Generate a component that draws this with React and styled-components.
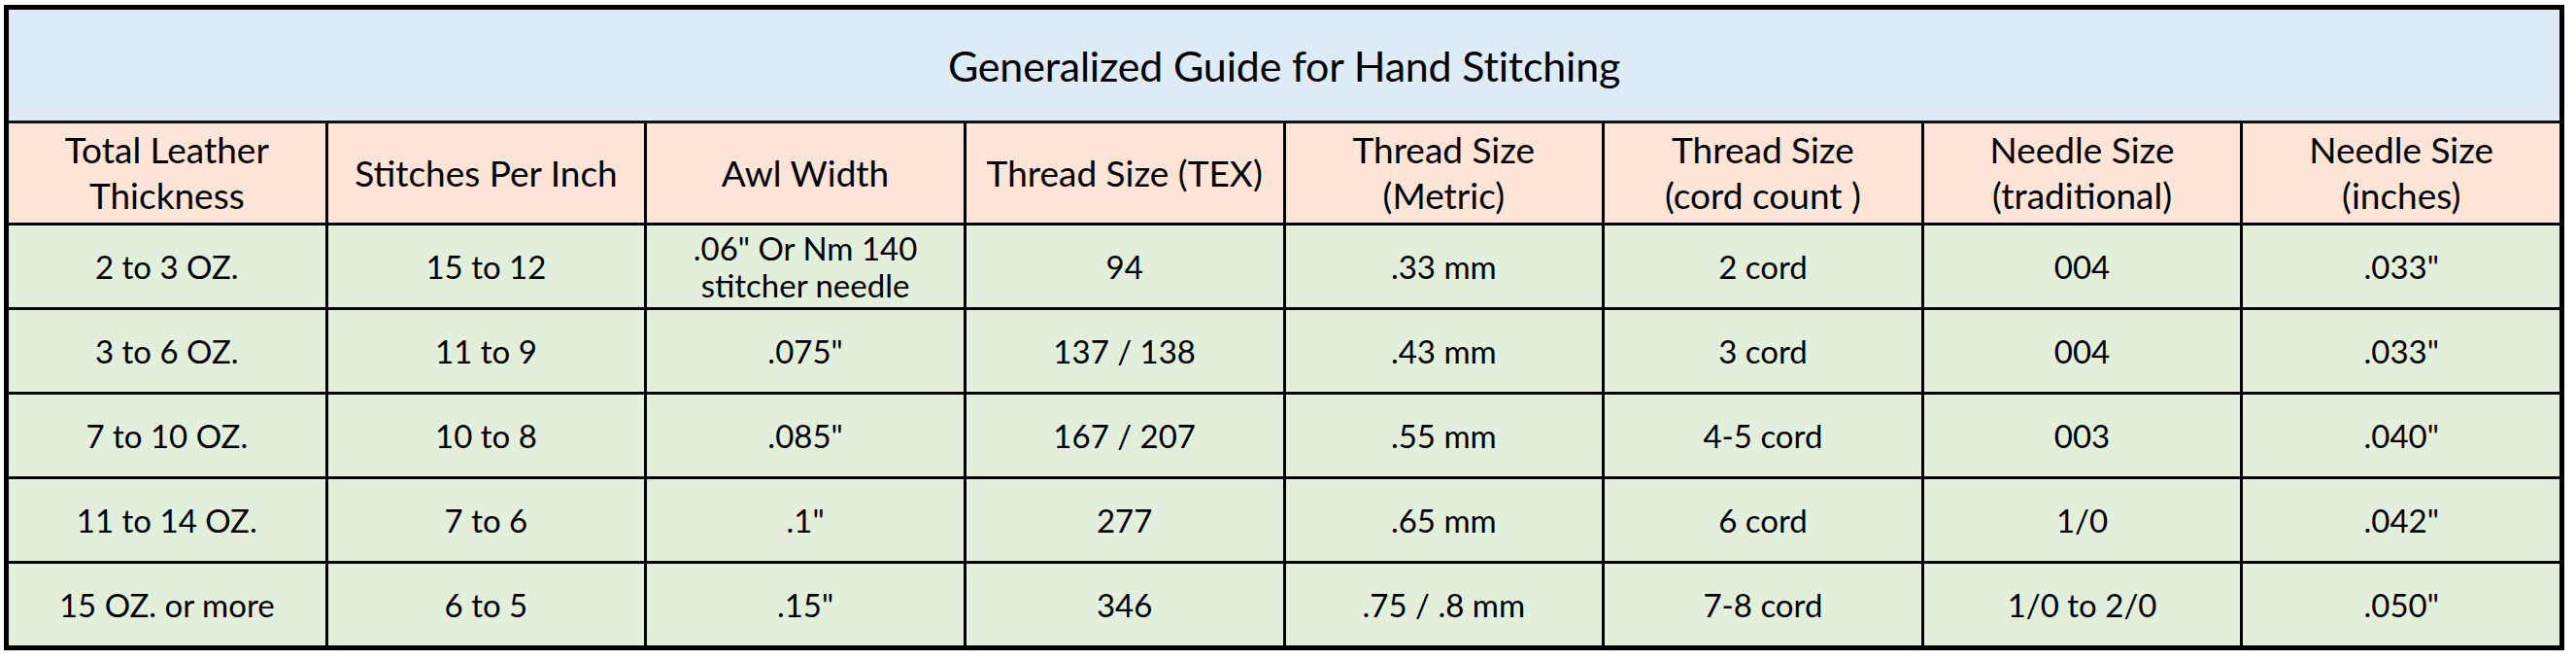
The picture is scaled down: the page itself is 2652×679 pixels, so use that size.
import React from 'react'
import styled, { createGlobalStyle } from 'styled-components'

const GlobalStyle = createGlobalStyle`
  html, body {
    margin: 0;
    padding: 0;
    background: #ffffff;
  }
  body {
    font-family: Lato, "Open Sans", "Liberation Sans", sans-serif;
    color: #000;
  }
`

const Sheet = styled.div`
  box-sizing: border-box;
  width: 2636px;
  margin: 5px 0 0 4px;
  border: 5px solid #000;
  background: #000;
`

const Title = styled.div`
  height: 114px;
  display: flex;
  align-items: center;
  justify-content: center;
  background: #ddebf7;
  border-bottom: 3px solid #111;
  font-size: 43px;
  letter-spacing: -0.2px;
`

const Grid = styled.div`
  display: grid;
  grid-template-columns: repeat(8, 1fr);
  grid-template-rows: 102px repeat(5, 84px);
  gap: 3px;
  background: #000;
`

const Cell = styled.div`
  display: flex;
  align-items: center;
  justify-content: center;
  text-align: center;
  background: ${props => (props.head ? '#fce4d6' : '#e2efda')};
  font-size: ${props => (props.head ? '37px' : '33px')};
  line-height: ${props => (props.head ? '47px' : '38px')};
  padding-bottom: ${props => (props.head ? '2px' : '0')};
`

const headers = [
  ['Total Leather', 'Thickness'],
  ['Stitches Per Inch'],
  ['Awl Width'],
  ['Thread Size (TEX)'],
  ['Thread Size', '(Metric)'],
  ['Thread Size', '(cord count )'],
  ['Needle Size', '(traditional)'],
  ['Needle Size', '(inches)'],
]

const rows = [
  ['2 to 3 OZ.', '15 to 12', ['.06" Or Nm 140', 'stitcher needle'], '94', '.33 mm', '2 cord', '004', '.033"'],
  ['3 to 6 OZ.', '11 to 9', '.075"', '137 / 138', '.43 mm', '3 cord', '004', '.033"'],
  ['7 to 10 OZ.', '10 to 8', '.085"', '167 / 207', '.55 mm', '4-5 cord', '003', '.040"'],
  ['11 to 14 OZ.', '7 to 6', '.1"', '277', '.65 mm', '6 cord', '1/0', '.042"'],
  ['15 OZ. or more', '6 to 5', '.15"', '346', '.75 / .8 mm', '7-8 cord', '1/0 to 2/0', '.050"'],
]

const Lines = ({ text }) => {
  const parts = Array.isArray(text) ? text : [text]
  return (
    <div>
      {parts.map((p, i) => (
        <React.Fragment key={i}>
          {i > 0 && <br />}
          {p}
        </React.Fragment>
      ))}
    </div>
  )
}

const App = () => (
  <>
    <GlobalStyle />
    <Sheet>
      <Title>Generalized Guide for Hand Stitching</Title>
      <Grid>
        {headers.map((h, i) => (
          <Cell head key={'h' + i}>
            <Lines text={h} />
          </Cell>
        ))}
        {rows.map((r, ri) =>
          r.map((c, ci) => (
            <Cell key={ri + '-' + ci}>
              <Lines text={c} />
            </Cell>
          ))
        )}
      </Grid>
    </Sheet>
  </>
)

export default App
